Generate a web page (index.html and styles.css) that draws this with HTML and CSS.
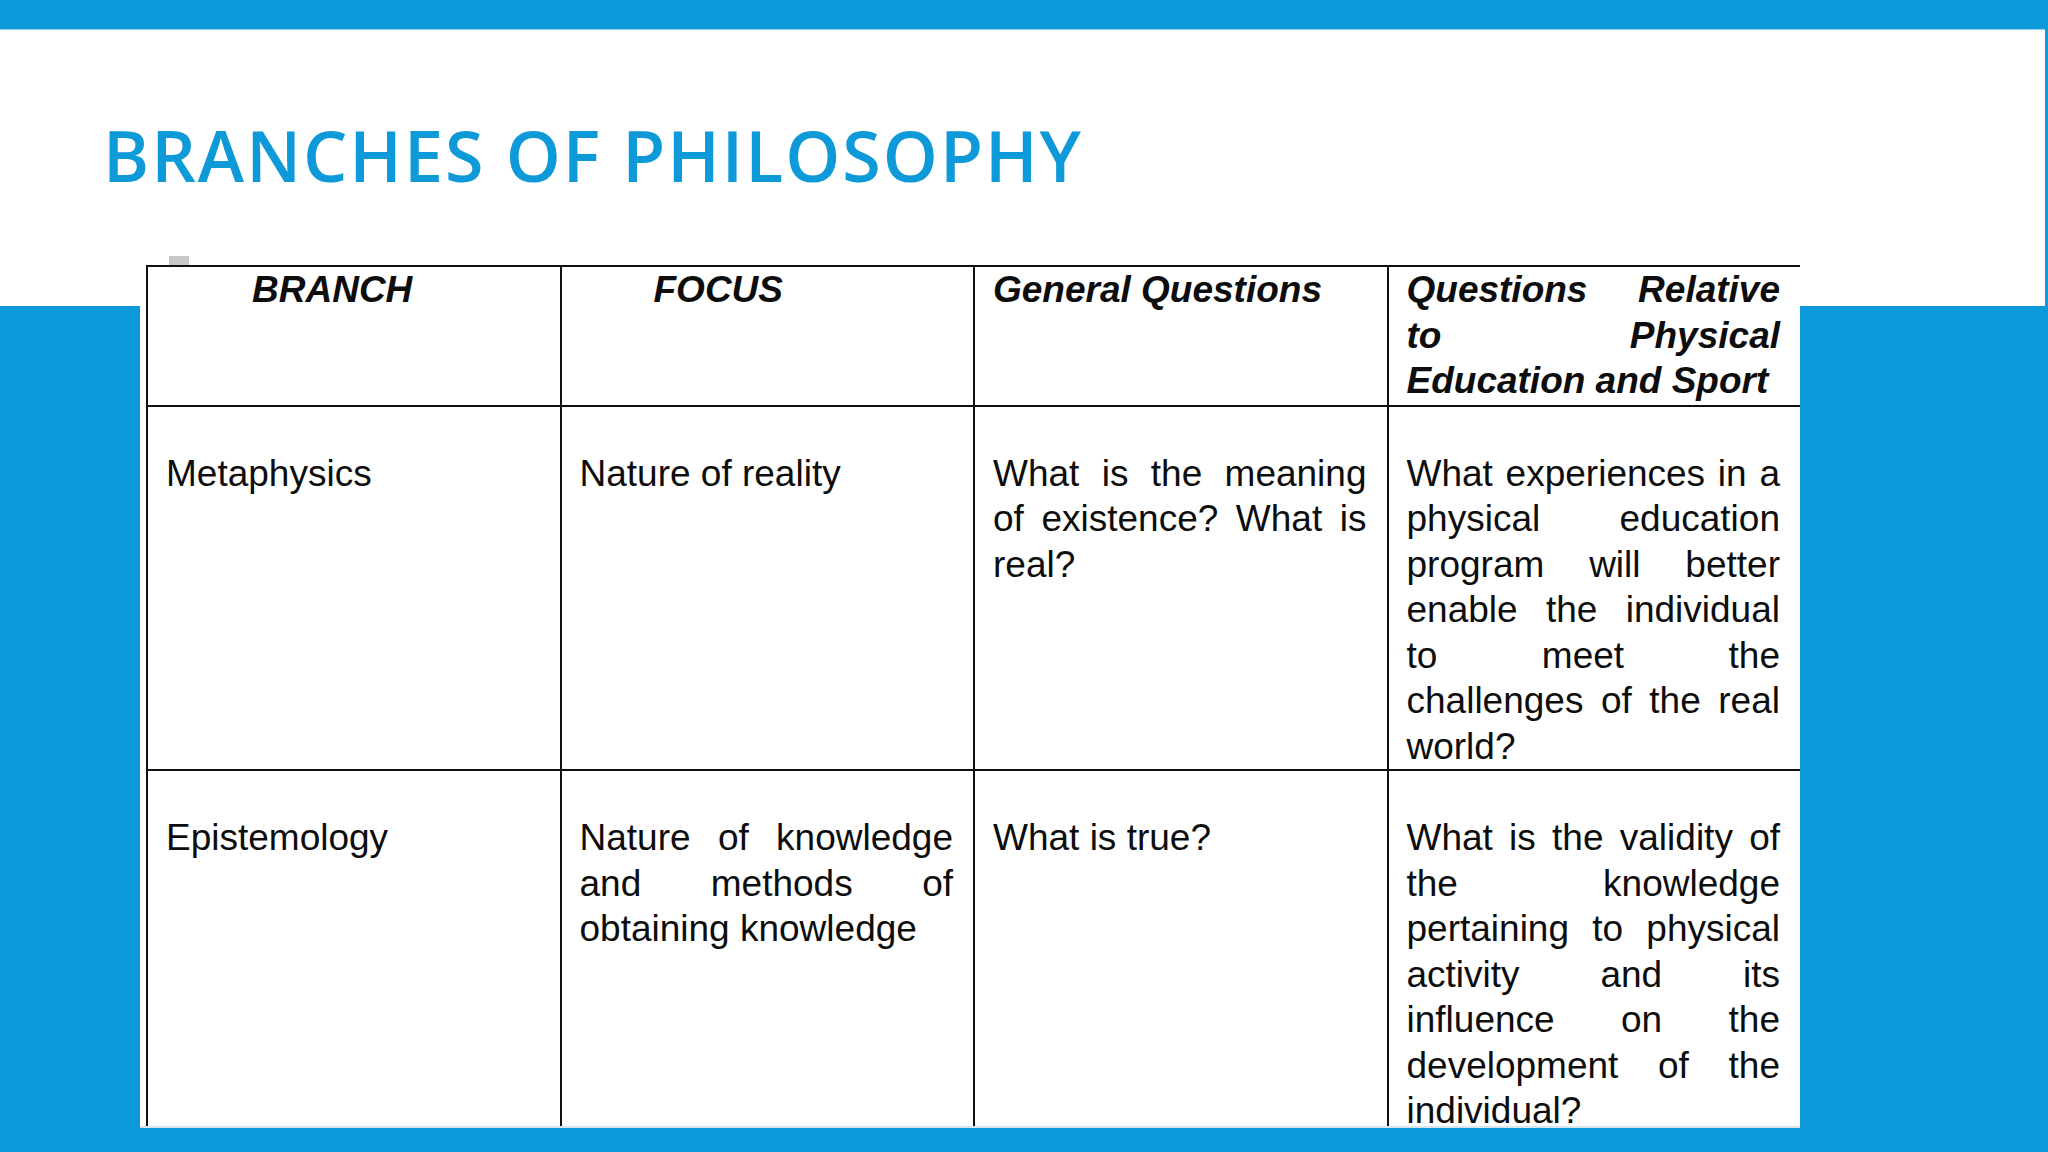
FILE: index.html
```html
<!DOCTYPE html>
<html lang="en">
<head>
<meta charset="utf-8">
<title>Branches of Philosophy</title>
<link rel="stylesheet" href="styles.css">
</head>
<body>
<div class="slide">
  <h1 class="title">BRANCHES OF PHILOSOPHY</h1>
  <div class="sheet">
    <div class="marker"></div>
    <table class="grid">
      <colgroup><col><col><col><col></colgroup>
      <thead>
        <tr>
          <th class="h-branch">BRANCH</th>
          <th class="h-focus">FOCUS</th>
          <th>General Questions</th>
          <th>
            <span class="j">Questions Relative</span>
            <span class="j">to Physical</span>
            <span class="l">Education and Sport</span>
          </th>
        </tr>
      </thead>
      <tbody>
        <tr>
          <td>Metaphysics</td>
          <td>Nature of reality</td>
          <td>
            <span class="j">What is the meaning</span>
            <span class="j">of existence? What is</span>
            <span class="l">real?</span>
          </td>
          <td>
            <span class="j">What experiences in a</span>
            <span class="j">physical education</span>
            <span class="j">program will better</span>
            <span class="j">enable the individual</span>
            <span class="j">to meet the</span>
            <span class="j">challenges of the real</span>
            <span class="l">world?</span>
          </td>
        </tr>
        <tr>
          <td>Epistemology</td>
          <td>
            <span class="j">Nature of knowledge</span>
            <span class="j">and methods of</span>
            <span class="l">obtaining knowledge</span>
          </td>
          <td>What is true?</td>
          <td>
            <span class="j">What is the validity of</span>
            <span class="j">the knowledge</span>
            <span class="j">pertaining to physical</span>
            <span class="j">activity and its</span>
            <span class="j">influence on the</span>
            <span class="j">development of the</span>
            <span class="l">individual?</span>
          </td>
        </tr>
      </tbody>
    </table>
  </div>
</div>
</body>
</html>
```
FILE: styles.css
```css
html, body {
  margin: 0;
  padding: 0;
}

body {
  width: 2048px;
  height: 1152px;
  overflow: hidden;
  background-color: #0b99db;
}

.slide {
  width: 2048px;
  height: 1152px;
  overflow: hidden;
  background:
    linear-gradient(to right, transparent 2045px, #0b99db 2045px),
    linear-gradient(to bottom, #0b99db 0, #0b99db 29px, #8fd0f0 29px, #8fd0f0 30px, #ffffff 30px, #ffffff 306px, transparent 306px);
}

.title {
  margin: 0;
  padding: 120px 0 0 103px;
  font-family: "Open Sans", "Noto Sans", sans-serif;
  font-weight: 600;
  font-size: 70px;
  line-height: 70px;
  letter-spacing: 2px;
  color: #0e9ad9;
}

.sheet {
  margin: 65px 0 0 140px;
  width: 1660px;
  height: 871px;
  background: #ffffff;
  overflow: hidden;
  border-bottom: 2px solid #d9e5ee;
}

.marker {
  margin: 1px 0 0 29px;
  width: 20px;
  height: 9px;
  background: #c8c8c8;
}

.grid {
  margin-left: 6px;
  width: 1656px;
  table-layout: fixed;
  border-collapse: collapse;
  font-family: "Liberation Sans", Arial, sans-serif;
  font-size: 37px;
  line-height: 45.5px;
  color: #0d0d0d;
}

.grid col {
  width: 25%;
}

.grid th,
.grid td {
  border: 2px solid #111111;
  padding: 0 20px 0 18px;
  text-align: left;
  vertical-align: top;
}

.grid th {
  font-weight: bold;
  font-style: italic;
  padding-top: 0;
  padding-bottom: 1px;
}

.grid td {
  font-weight: normal;
  padding-top: 44px;
  padding-bottom: 0;
}

.grid th.h-branch {
  padding-left: 104px;
}

.grid th.h-focus {
  padding-left: 92px;
}

.j {
  display: block;
  text-align: justify;
  text-align-last: justify;
}

.l {
  display: block;
  text-align: left;
}
```
